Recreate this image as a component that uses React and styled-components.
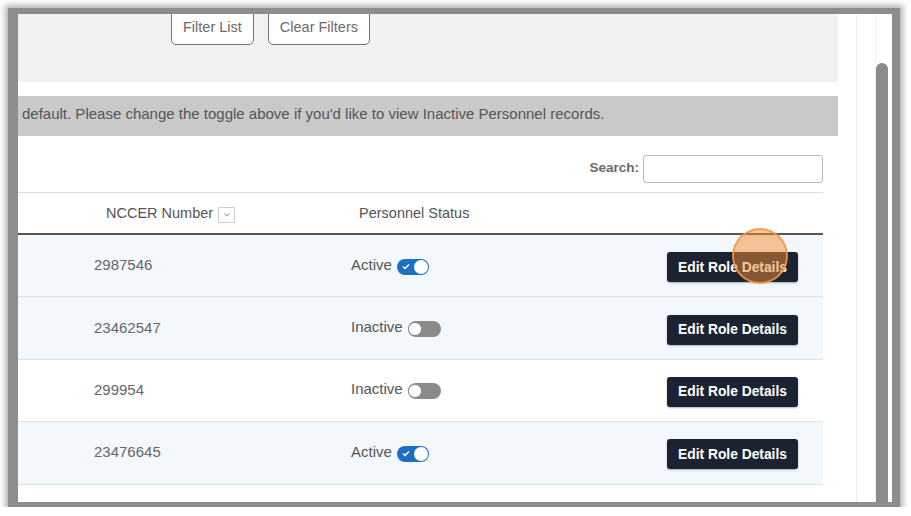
import React from "react";
import styled, { createGlobalStyle, css } from "styled-components";

const Global = createGlobalStyle`
  html, body { margin: 0; padding: 0; background: #ffffff; }
  body { font-family: "Liberation Sans", Arial, sans-serif; }
  * { box-sizing: border-box; }
`;

const Frame = styled.div`
  margin: 8px 0 0 8px;
  width: 892px;
  height: 499px;
  border-style: solid;
  border-color: #8d8d8d;
  border-width: 6px 8px 5px 10px;
  box-shadow: 0 0 6px 3px rgba(0, 0, 0, 0.3);
  overflow: hidden;
  display: flex;
  background: #fff;
`;

const Main = styled.div`
  width: 820px;
  flex: none;
  display: flex;
  flex-direction: column;
  & > * { flex: none; }
`;

const Gutter = styled.div`
  width: 38px;
  flex: none;
  border-right: 1px solid #f0f0f0;
  display: flex;
  justify-content: center;
`;

const GutterLine = styled.div`
  width: 1px;
  background: #ececec;
`;

const ScrollTrack = styled.div`
  width: 12px;
  flex: none;
  padding-top: 49px;
  display: flex;
`;

const Thumb = styled.div`
  flex: 1;
  background: #8b8b8b;
  border-radius: 6px 6px 0 0;
`;

const FilterPanel = styled.div`
  height: 68px;
  background: #f2f2f2;
  display: flex;
  align-items: flex-start;
  gap: 14px;
  padding-left: 153px;
`;

const OutlineButton = styled.button`
  margin-top: -5px;
  height: 36px;
  padding: 0 11px;
  background: #fff;
  border: 1.5px solid #6e7480;
  border-radius: 5px;
  color: #6a6a6a;
  font-family: "Liberation Sans", Arial, sans-serif;
  font-size: 14.5px;
  display: flex;
  align-items: center;
`;

const Banner = styled.div`
  margin-top: 14px;
  height: 40px;
  background: #c9c9c9;
  color: #555;
  font-size: 15px;
  display: flex;
  align-items: center;
  padding: 0 0 6px 4px;
  white-space: nowrap;
  overflow: hidden;
`;

const TableArea = styled.div`
  width: 805px;
  display: flex;
  flex-direction: column;
  & > * { flex: none; }
`;

const SearchBar = styled.div`
  height: 57px;
  border-bottom: 1px solid #dedede;
  display: flex;
  align-items: flex-start;
  justify-content: flex-end;
  padding-top: 19px;
  gap: 4px;
`;

const SearchLabel = styled.label`
  font-size: 13.5px;
  font-weight: bold;
  color: #6a6a6a;
  margin-top: 5px;
`;

const SearchInput = styled.input`
  width: 180px;
  height: 28px;
  border: 1px solid #b9b9b9;
  border-radius: 3px;
  background: #fff;
`;

const Cols = css`
  display: grid;
  grid-template-columns: 76px 257px 1fr auto;
  align-items: center;
  padding-right: 25px;
`;

const HeaderRow = styled.div`
  ${Cols};
  height: 42px;
  border-bottom: 2px solid #565656;
  color: #555;
  font-size: 14.5px;
`;

const HeaderCell = styled.div`
  padding-left: ${(p) => p.$indent}px;
  display: flex;
  align-items: center;
  gap: 5px;
`;

const SortBox = styled.span`
  width: 17px;
  height: 16px;
  border: 1px solid #cfcfcf;
  margin-top: 4px;
  display: flex;
  align-items: center;
  justify-content: center;
`;

const Row = styled.div`
  ${Cols};
  height: 62.4px;
  background: ${(p) => (p.$tint ? "#f3f8fc" : "#ffffff")};
  border-bottom: 1px solid #dde2e7;
  font-size: 15px;
`;

const NumberCell = styled.div`
  color: #666;
  margin-top: -2px;
`;

const StatusCell = styled.div`
  display: flex;
  align-items: center;
  gap: 5px;
  color: #555;
  margin-top: -3px;
`;

const Toggle = styled.span`
  position: relative;
  width: ${(p) => (p.$on ? 32 : 33)}px;
  height: 16px;
  border-radius: 8px;
  background: ${(p) => (p.$on ? "#1d6fc4" : "#8a8a8a")};
  margin-top: 5px;
  display: inline-block;
`;

const Knob = styled.span`
  position: absolute;
  top: 1px;
  ${(p) => (p.$on ? "right: 1px;" : "left: 0px;")}
  width: 14px;
  height: 14px;
  border-radius: 50%;
  background: #fff;
  border: ${(p) => (p.$on ? "none" : "1px solid #8a8a8a")};
`;

const Check = styled.svg`
  position: absolute;
  left: 5px;
  top: 4px;
`;

const ActionCell = styled.div`
  position: relative;
`;

const DarkButton = styled.button`
  height: 30px;
  width: 131px;
  background: #1b2333;
  color: #fff;
  border: none;
  border-radius: 3px;
  font-family: "Liberation Sans", Arial, sans-serif;
  font-weight: bold;
  font-size: 13.8px;
  box-shadow: 0 1px 2px rgba(0, 0, 0, 0.3);
  margin-top: 3px;
  padding: 0;
`;

const CursorHalo = styled.span`
  position: absolute;
  left: 65px;
  top: -21px;
  width: 56px;
  height: 56px;
  border-radius: 50%;
  background: rgba(240, 140, 50, 0.5);
  border: 2px solid rgba(240, 150, 70, 0.85);
  pointer-events: none;
`;

const rows = [
  { n: "2987546", on: true, tint: true, halo: true },
  { n: "23462547", on: false, tint: true },
  { n: "299954", on: false, tint: false },
  { n: "23476645", on: true, tint: true },
  { n: "", on: null, tint: false },
];

function StatusToggle({ on }) {
  return (
    <Toggle $on={on}>
      {on && (
        <Check width="8" height="7" viewBox="0 0 8 7">
          <path d="M1 3.6 L3 5.6 L7 1.4" stroke="#fff" strokeWidth="1.4" fill="none" />
        </Check>
      )}
      <Knob $on={on} />
    </Toggle>
  );
}

export default function App() {
  return (
    <>
      <Global />
      <Frame>
        <Main>
          <FilterPanel>
            <OutlineButton>Filter List</OutlineButton>
            <OutlineButton>Clear Filters</OutlineButton>
          </FilterPanel>
          <Banner>
            default. Please change the toggle above if you'd like to view Inactive Personnel records.
          </Banner>
          <TableArea>
            <SearchBar>
              <SearchLabel>Search:</SearchLabel>
              <SearchInput />
            </SearchBar>
            <HeaderRow>
              <div />
              <HeaderCell $indent={12}>
                NCCER Number
                <SortBox>
                  <svg width="8" height="6" viewBox="0 0 8 6">
                    <path d="M1.5 1.5 L4 4.2 L6.5 1.5" stroke="#888" strokeWidth="1" fill="none" />
                  </svg>
                </SortBox>
              </HeaderCell>
              <HeaderCell $indent={8}>Personnel Status</HeaderCell>
              <div />
            </HeaderRow>
            {rows.map((r, i) => (
              <Row key={i} $tint={r.tint}>
                <div />
                <NumberCell>{r.n}</NumberCell>
                <StatusCell>
                  {r.on !== null && (
                    <>
                      {r.on ? "Active" : "Inactive"}
                      <StatusToggle on={r.on} />
                    </>
                  )}
                </StatusCell>
                <ActionCell>
                  {r.on !== null && <DarkButton>Edit Role Details</DarkButton>}
                  {r.halo && <CursorHalo />}
                </ActionCell>
              </Row>
            ))}
          </TableArea>
        </Main>
        <Gutter>
          <GutterLine />
        </Gutter>
        <ScrollTrack>
          <Thumb />
        </ScrollTrack>
      </Frame>
    </>
  );
}
